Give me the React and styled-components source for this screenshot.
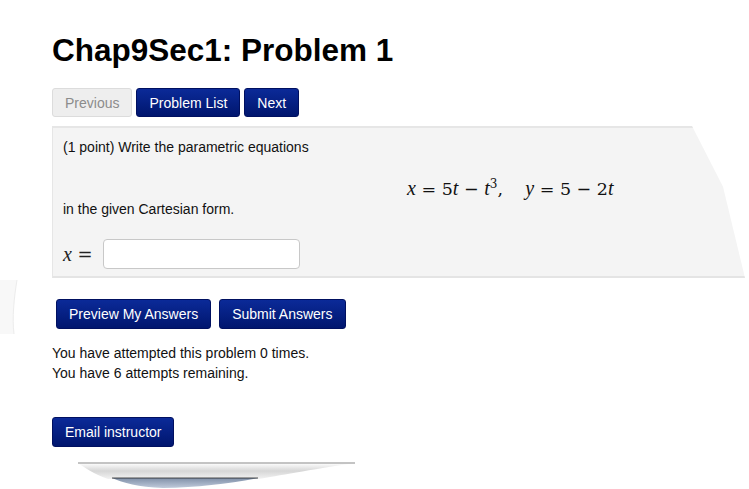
import React from "react";
import styled, { createGlobalStyle } from "styled-components";

const GlobalStyle = createGlobalStyle`
  html, body {
    margin: 0;
    padding: 0;
    background: #fff;
    overflow: hidden;
  }
  body {
    font-family: "Liberation Sans", Arial, sans-serif;
    font-size: 14px;
    line-height: 20px;
    color: #111;
  }
`;

const Page = styled.div`
  position: relative;
  width: 749px;
  height: 489px;
  padding: 0 0 0 52px;
  box-sizing: border-box;
`;

const Title = styled.h1`
  margin: 0;
  padding-top: 32px;
  font-size: 31.5px;
  line-height: 36px;
  font-weight: bold;
  color: #000;
`;

const NavBar = styled.div`
  display: flex;
  gap: 4px;
  margin-top: 20px;
`;

const Button = styled.button`
  font-family: "Liberation Sans", Arial, sans-serif;
  font-size: 14px;
  line-height: 20px;
  height: ${(p) => p.$h || 29}px;
  padding: 0 12px;
  border-radius: 3px;
  cursor: pointer;
  color: #fff;
  border: 1px solid #001060;
  background: linear-gradient(#0b2a98, #00166e);
  white-space: nowrap;

  &:disabled {
    color: #8c8c8c;
    border-color: #dcdcdc;
    background: #eeeeee;
    cursor: default;
  }
`;

const ProblemBox = styled.div`
  margin-top: 9px;
  width: 693px;
  height: 152px;
  box-sizing: border-box;
  background: #f4f4f4;
  border-top: 2px solid #e6e6e6;
  border-bottom: 2px solid #e4e4e4;
  border-left: 1px solid #e6e6e6;
  padding: 9px 10px 0 10px;
  clip-path: polygon(0 0, calc(100% - 53px) 0, calc(100% - 22px) 40%, 100% 100%, 0 100%);
`;

const Para = styled.p`
  margin: 0;
`;

const Display = styled.div`
  height: 42px;
  box-sizing: border-box;
  padding: 21px 0 0 344px;
  font-family: "DejaVu Serif", "Liberation Serif", serif;
  font-size: 17.5px;
  line-height: 20px;
  color: #111;
  white-space: pre;
`;

const Var = styled.i`
  font-family: "Liberation Serif", serif;
  font-size: 20px;
`;

const Sup = styled.sup`
  font-size: 12px;
  line-height: 0;
`;

const AnswerRow = styled.div`
  display: flex;
  align-items: center;
  gap: 9px;
  margin-top: 20px;
`;

const Label = styled.span`
  font-family: "DejaVu Serif", "Liberation Serif", serif;
  font-size: 18px;
  color: #222;
  width: 31px;
`;

const Input = styled.input`
  width: 197px;
  height: 30px;
  box-sizing: border-box;
  border: 1px solid #c8c8c8;
  border-radius: 4px;
  background: #fff;
`;

const SubmitRow = styled.div`
  display: flex;
  gap: 8px;
  margin: 21px 0 0 4px;
`;

const Info = styled.div`
  margin-top: 14px;
  color: #111;
`;

const EmailRow = styled.div`
  margin-top: 34px;
`;

const Curl = styled.svg`
  position: absolute;
  left: 78px;
  top: 460px;
`;

const SideCurl = styled.svg`
  position: absolute;
  left: 0;
  top: 278px;
`;

export default function App() {
  return (
    <>
      <GlobalStyle />
      <Page>
        <Title>Chap9Sec1: Problem 1</Title>
        <NavBar>
          <Button disabled>Previous</Button>
          <Button>Problem List</Button>
          <Button>Next</Button>
        </NavBar>
        <ProblemBox>
          <Para>(1 point) Write the parametric equations</Para>
          <Display>
            <Var>x</Var>{" = 5"}<Var>t</Var>{" − "}<Var>t</Var>
            <Sup>3</Sup>{",    "}<Var>y</Var>{" = 5 − 2"}<Var>t</Var>
          </Display>
          <Para>in the given Cartesian form.</Para>
          <AnswerRow>
            <Label>
              <Var>x</Var> =
            </Label>
            <Input type="text" />
          </AnswerRow>
        </ProblemBox>
        <SubmitRow>
          <Button $h={30}>Preview My Answers</Button>
          <Button $h={30}>Submit Answers</Button>
        </SubmitRow>
        <Info>
          You have attempted this problem 0 times.
          <br />
          You have 6 attempts remaining.
        </Info>
        <EmailRow>
          <Button $h={30}>Email instructor</Button>
        </EmailRow>
        <SideCurl width="20" height="60" viewBox="0 0 20 60">
          <path d="M17 2 C14 20 12 40 14 56 L0 56 L0 2 Z" fill="#f8f8f8" />
          <path d="M17 2 C14 20 12 40 14 56" fill="none" stroke="#ececec" />
        </SideCurl>
        <Curl width="280" height="29" viewBox="0 0 280 29">
          <defs>
            <linearGradient id="cg" x1="0" y1="0" x2="0" y2="1">
              <stop offset="0" stopColor="#ffffff" />
              <stop offset="0.5" stopColor="#d6d6d6" />
              <stop offset="1" stopColor="#f2f2f2" />
            </linearGradient>
            <linearGradient id="cb" x1="0" y1="0" x2="0" y2="1">
              <stop offset="0" stopColor="#8090a8" />
              <stop offset="1" stopColor="#c0cadb" />
            </linearGradient>
          </defs>
          <path d="M0 3 L277 3 C230 10 200 16 180 19 L30 19 C15 14 8 8 0 3 Z" fill="url(#cg)" />
          <line x1="0" y1="3" x2="277" y2="3" stroke="#8a8a8a" strokeWidth="1.2" />
          <path d="M34 18 L180 18 C150 24 120 27 85 28 C60 27 45 23 34 18 Z" fill="url(#cb)" />
          <line x1="34" y1="18" x2="180" y2="18" stroke="#222" strokeWidth="0.8" />
        </Curl>
      </Page>
    </>
  );
}
